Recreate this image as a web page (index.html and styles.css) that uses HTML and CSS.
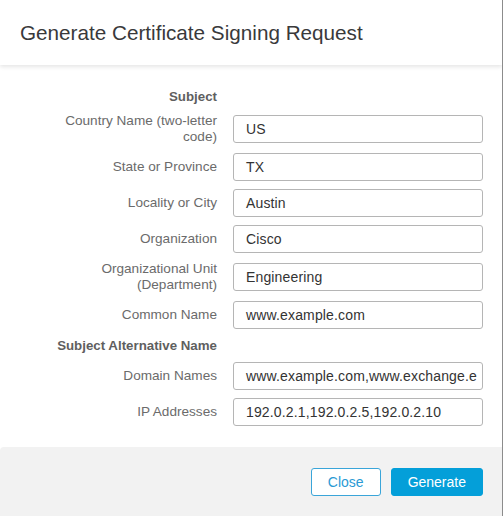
FILE: index.html
```html
<!DOCTYPE html>
<html lang="en">
<head>
<meta charset="utf-8">
<title>Generate Certificate Signing Request</title>
<link rel="stylesheet" href="styles.css">
</head>
<body>
<div class="modal">
  <div class="modal-header">
    <h1 class="modal-title">Generate Certificate Signing Request</h1>
  </div>
  <div class="modal-body">
    <div class="form-grid">
      <div class="section-title">Subject</div>
      <div class="spacer"></div>

      <label class="field-label">Country Name (two-letter code)</label>
      <div class="field-input">US</div>

      <label class="field-label">State or Province</label>
      <div class="field-input">TX</div>

      <label class="field-label">Locality or City</label>
      <div class="field-input">Austin</div>

      <label class="field-label">Organization</label>
      <div class="field-input">Cisco</div>

      <label class="field-label">Organizational Unit (Department)</label>
      <div class="field-input">Engineering</div>

      <label class="field-label">Common Name</label>
      <div class="field-input">www.example.com</div>

      <div class="section-title">Subject Alternative Name</div>
      <div class="spacer"></div>

      <label class="field-label">Domain Names</label>
      <div class="field-input">www.example.com,www.exchange.e</div>

      <label class="field-label">IP Addresses</label>
      <div class="field-input">192.0.2.1,192.0.2.5,192.0.2.10</div>
    </div>
  </div>
  <div class="modal-footer">
    <button class="btn btn-secondary">Close</button>
    <button class="btn btn-primary">Generate</button>
  </div>
</div>
</body>
</html>
```
FILE: styles.css
```css
html, body {
  margin: 0;
  padding: 0;
  background: #ffffff;
}

body {
  font-family: "Liberation Sans", Arial, sans-serif;
}

.modal {
  width: 502px;
  height: 516px;
  border-right: 1px solid #8c8c8c;
  background: #ffffff;
  display: flex;
  flex-direction: column;
  overflow: hidden;
}

.modal-header {
  height: 65px;
  display: flex;
  align-items: center;
  padding-left: 20px;
  box-shadow: 0 2px 4px rgba(0, 0, 0, 0.10);
  position: relative;
  z-index: 1;
  flex-shrink: 0;
}

.modal-title {
  margin: 0;
  font-weight: normal;
  font-size: 20.7px;
  color: #39393b;
}

.modal-body {
  padding: 23px 0 21px 52px;
  flex-shrink: 0;
}

.form-grid {
  display: grid;
  grid-template-columns: 165px 250px;
  column-gap: 16px;
  row-gap: 8px;
  align-items: center;
}

.section-title {
  text-align: right;
  font-weight: bold;
  font-size: 13.3px;
  line-height: 17px;
  color: #5f5f5f;
}

.field-label {
  text-align: right;
  font-size: 13.6px;
  line-height: 16px;
  color: #6b6b6b;
}

.field-input {
  height: 26px;
  border: 1px solid #b5b5b5;
  border-radius: 3px;
  padding: 0 8px 0 12px;
  font-size: 14px;
  line-height: 26px;
  letter-spacing: 0.15px;
  color: #333333;
  white-space: nowrap;
  overflow: hidden;
}

.modal-footer {
  flex: 1;
  background: #f2f2f2;
  border-top-left-radius: 4px;
  display: flex;
  justify-content: flex-end;
  align-items: flex-start;
  gap: 10px;
  padding: 21px 19px 0 0;
}

.btn {
  height: 28px;
  padding: 0 16px;
  border-radius: 3px;
  font-family: "Liberation Sans", Arial, sans-serif;
  font-size: 14px;
  line-height: 26px;
  cursor: pointer;
}

.btn-secondary {
  background: #ffffff;
  border: 1px solid #3aa5d9;
  color: #2a9ad4;
}

.btn-primary {
  background: #049fd9;
  border: 1px solid #049fd9;
  color: #ffffff;
}
```
